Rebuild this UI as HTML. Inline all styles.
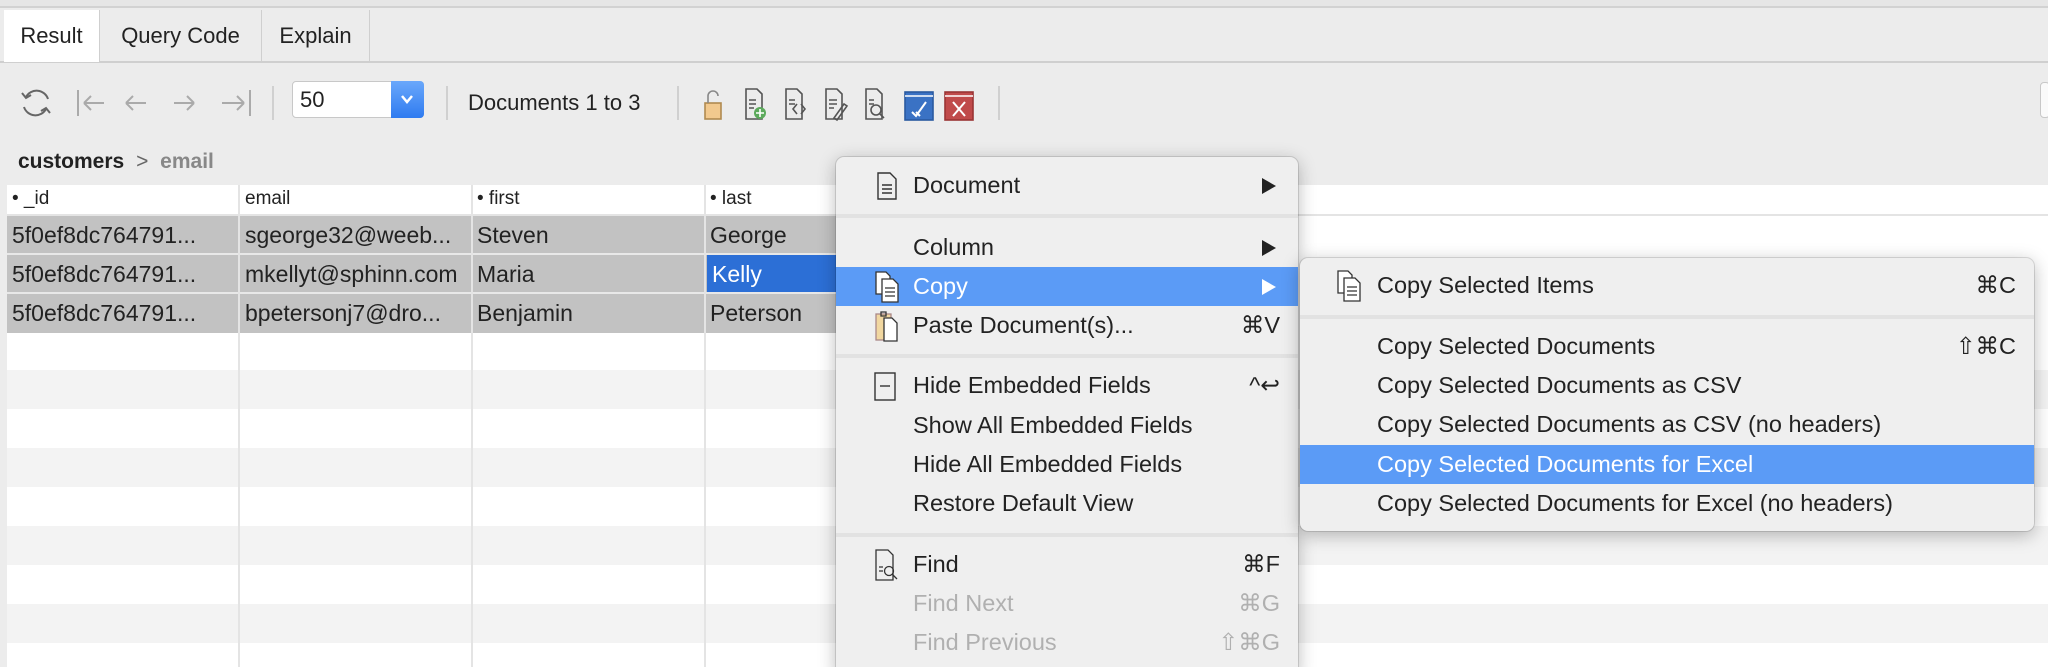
<!DOCTYPE html>
<html style="overflow:hidden;width:2048px;height:667px"><head><meta charset="utf-8"><style>
*{box-sizing:border-box;margin:0;padding:0}
body{width:2048px;height:667px;overflow:hidden;background:#ececec;font-family:"Liberation Sans",Arial,sans-serif;position:relative;color:#222}
.abs{position:absolute}
.tab{position:absolute;top:10px;height:52px;font-size:22px;line-height:52px;text-align:center;border-right:1px solid #cfcfcf}
.sep{position:absolute;top:86px;width:2px;height:34px;background:#d0d0d0}
.row{position:absolute;left:7px;width:840px;height:39px;font-size:23px;line-height:39px}
.cell{position:absolute;top:0;height:39px;white-space:nowrap;overflow:hidden;padding-left:5px}
.vl{position:absolute;top:185px;bottom:0;width:2px;background:#e4e4e4}
.menu{position:absolute;background:#efefef;border-radius:8px;box-shadow:0 4px 18px rgba(0,0,0,.28),0 0 0 1px rgba(0,0,0,.12)}
.mi{position:absolute;left:0;right:0;height:39px;font-size:23.5px;line-height:39px;color:#222}
.mi .t{position:absolute;left:77px}
.mi .k{position:absolute;right:18px}
.mi .a{position:absolute;right:22px;top:12px;width:0;height:0;border-left:14px solid #222;border-top:8px solid transparent;border-bottom:8px solid transparent}
.hl{background:#5b9bf6;color:#fff}
.hl .a{border-left-color:#fff}
.dis{color:#b0b0b0}
.ms{position:absolute;left:0;right:0;height:4px;background:#e2e2e2}
</style></head><body>
<div class="abs" style="left:0;top:0;width:2048px;height:8px;background:#e6e6e6;border-bottom:2px solid #d2d2d2"></div>
<div class="abs" style="left:0;top:61px;width:2048px;height:2px;background:#cfcfcf"></div>
<div class="tab" style="left:4px;width:96px;background:#fff">Result</div>
<div class="tab" style="left:100px;width:162px">Query Code</div>
<div class="tab" style="left:262px;width:108px">Explain</div>

<svg class="abs" style="left:18px;top:85px" width="36" height="36" viewBox="0 0 36 36" fill="none" stroke="#666" stroke-width="2"><path d="M8 12 A12 12 0 0 1 30 14"/><path d="M28 24 A12 12 0 0 1 6 22"/><path d="M4 8 L8 13 L13 10"/><path d="M32 28 L28 23 L23 26"/></svg>
<svg class="abs" style="left:74px;top:88px" width="180" height="30" viewBox="0 0 180 30" fill="none" stroke="#aaa" stroke-width="2"><path d="M4 2V28M10 15H30M10 15l7-7M10 15l7 7"/><path d="M52 15H72M52 15l7-7M52 15l7 7"/><path d="M100 15H120M120 15l-7-7M120 15l-7 7"/><path d="M176 2V28M148 15H170M170 15l-7-7M170 15l-7 7"/></svg>
<div class="sep" style="left:272px"></div>
<div class="abs" style="left:292px;top:81px;width:132px;height:37px;background:#fff;border:1px solid #c8c8c8;border-radius:4px;font-size:22px;line-height:35px;padding-left:7px">50</div>
<div class="abs" style="left:391px;top:81px;width:33px;height:37px;background:linear-gradient(#6aa8fb,#2f7bf0);border-radius:0 4px 4px 0"><svg width="33" height="37"><path d="M11 15l5 6 5-6" stroke="#fff" stroke-width="2.5" fill="none"/></svg></div>
<div class="sep" style="left:446px"></div>
<div class="abs" style="left:468px;top:88px;font-size:22px;line-height:30px">Documents 1 to 3</div>
<div class="sep" style="left:677px"></div>
<svg class="abs" style="left:700px;top:86px" width="280" height="36" viewBox="0 0 280 36" fill="none" stroke="#555" stroke-width="1.6">
<rect x="5" y="17" width="16" height="16" fill="#f2c98e" stroke="#b08a50"/><path d="M8 17V10a5 5 0 0 1 10 0" stroke="#888"/>
<path d="M46 3h11l5 5v25H46z"/><path d="M49 14h7M49 18h7M49 22h5"/><circle cx="60" cy="27" r="6" fill="#5caa5c" stroke="none"/><path d="M60 23v8M56 27h8" stroke="#fff"/>
<path d="M86 3h11l5 5v25H86z"/><path d="M89 14h6M89 18h6M97 18l-4 5 4 5M101 18l4 5-4 5"/>
<path d="M126 3h11l5 5v25h-16z"/><path d="M129 14h8M129 18h8M129 22h5M134 32l10-14 3 2-10 14z"/>
<path d="M166 3h11l5 5v25h-16z"/><path d="M169 14h5M169 18h5"/><circle cx="176" cy="24" r="5"/><path d="M180 28l4 4"/>
<rect x="205" y="6" width="28" height="28" fill="#3a72c4" stroke="#2a5aa0"/><path d="M205 10h28" stroke="#fff"/><path d="M212 26l4 4 10-14M216 26l4 4" stroke="#fff" stroke-width="2"/>
<rect x="245" y="6" width="28" height="28" fill="#c04a4a" stroke="#9a3535"/><path d="M245 10h28" stroke="#fff"/><path d="M253 16l12 14M265 16l-12 14" stroke="#fff" stroke-width="2"/>
</svg>
<div class="sep" style="left:998px"></div>
<div class="abs" style="left:2040px;top:82px;width:10px;height:36px;border:1px solid #c8c8c8;border-radius:4px;background:#fafafa"></div>

<div class="abs" style="left:18px;top:148px;font-size:21px;line-height:28px"><b>customers</b> <span style="color:#666;margin:0 6px">&gt;</span> <b style="color:#888">email</b></div>

<div class="abs" style="left:7px;top:185px;width:2041px;height:482px;background:#fff"></div>
<div class="abs" style="left:7px;top:331px;width:2041px;height:336px;background:repeating-linear-gradient(#fff 0 39px,#f3f3f3 39px 78px)"></div>
<div class="row" style="top:183px;font-size:19px;height:32px;line-height:32px">
<div class="cell" style="left:0">• _id</div><div class="cell" style="left:233px">email</div><div class="cell" style="left:465px">• first</div><div class="cell" style="left:698px">• last</div></div>
<div class="abs" style="left:7px;top:214px;width:2041px;height:2px;background:#e4e4e4"></div>
<div class="row" style="top:216px;background:#c2c2c2"><div class="cell" style="left:0;width:230px">5f0ef8dc764791...</div><div class="cell" style="left:233px;width:232px">sgeorge32@weeb...</div><div class="cell" style="left:465px">Steven</div><div class="cell" style="left:698px">George</div></div>
<div class="row" style="top:255px;background:#c2c2c2"><div class="cell" style="left:0;width:230px">5f0ef8dc764791...</div><div class="cell" style="left:233px;width:232px">mkellyt@sphinn.com</div><div class="cell" style="left:465px">Maria</div><div class="cell" style="left:700px;width:140px;background:#2c6fd6;color:#fff">Kelly</div></div>
<div class="row" style="top:294px;background:#c2c2c2"><div class="cell" style="left:0;width:230px">5f0ef8dc764791...</div><div class="cell" style="left:233px;width:232px">bpetersonj7@dro...</div><div class="cell" style="left:465px">Benjamin</div><div class="cell" style="left:698px">Peterson</div></div>
<div class="abs" style="left:7px;top:253px;width:840px;height:2px;background:#e8e8e8"></div>
<div class="abs" style="left:7px;top:292px;width:840px;height:2px;background:#e8e8e8"></div>
<div class="vl" style="left:238px"></div><div class="vl" style="left:471px"></div><div class="vl" style="left:704px"></div>

<div class="menu" style="left:836px;top:157px;width:462px;height:520px">
<div class="mi" style="top:9px"><svg class="abs" style="left:40px;top:6px" width="22" height="28" fill="none" stroke="#333" stroke-width="1.4"><path d="M2 1h12l6 6v20H2z"/><path d="M6 13h10M6 17h10M6 21h10"/></svg><span class="t">Document</span><span class="a"></span></div>
<div class="ms" style="top:57px"></div>
<div class="mi" style="top:71px"><span class="t">Column</span><span class="a"></span></div>
<div class="mi hl" style="top:110px"><svg class="abs" style="left:38px;top:4px" width="26" height="32" fill="#fff" stroke="#333" stroke-width="1.3"><path d="M2 1h10l4 4v18H2z"/><path d="M8 8h11l5 5v18H8z"/><path d="M11 17h10M11 21h10M11 25h10"/></svg><span class="t">Copy</span><span class="a"></span></div>
<div class="mi" style="top:149px"><svg class="abs" style="left:38px;top:4px" width="26" height="32" fill="none" stroke="#333" stroke-width="1.3"><rect x="2" y="4" width="15" height="26" fill="#f1d7a0" stroke="#a88"/><path d="M10 8h8l5 5v18H10z" fill="#fff"/><path d="M7 2h5v4H7z"/></svg><span class="t">Paste Document(s)...</span><span class="k">⌘V</span></div>
<div class="ms" style="top:197px"></div>
<div class="mi" style="top:209px"><svg class="abs" style="left:38px;top:6px" width="22" height="30" fill="none" stroke="#333" stroke-width="1.4"><rect x="1" y="1" width="20" height="27"/><path d="M6 14h10"/></svg><span class="t">Hide Embedded Fields</span><span class="k">^↩</span></div>
<div class="mi" style="top:249px"><span class="t">Show All Embedded Fields</span></div>
<div class="mi" style="top:288px"><span class="t">Hide All Embedded Fields</span></div>
<div class="mi" style="top:327px"><span class="t">Restore Default View</span></div>
<div class="ms" style="top:376px"></div>
<div class="mi" style="top:388px"><svg class="abs" style="left:38px;top:4px" width="28" height="32" fill="none" stroke="#333" stroke-width="1.3"><path d="M2 1h12l5 5v25H2z"/><path d="M5 18h4M5 22h4"/><circle cx="15" cy="22" r="4.5"/><path d="M18 25l5 5"/></svg><span class="t">Find</span><span class="k">⌘F</span></div>
<div class="mi dis" style="top:427px"><span class="t">Find Next</span><span class="k">⌘G</span></div>
<div class="mi dis" style="top:466px"><span class="t">Find Previous</span><span class="k">⇧⌘G</span></div>
</div>

<div class="menu" style="left:1300px;top:258px;width:734px;height:273px">
<div class="mi" style="top:8px"><svg class="abs" style="left:36px;top:4px" width="26" height="32" fill="#fff" stroke="#333" stroke-width="1.3"><path d="M2 1h10l4 4v18H2z"/><path d="M8 8h11l5 5v18H8z"/><path d="M11 17h10M11 21h10M11 25h10"/></svg><span class="t">Copy Selected Items</span><span class="k">⌘C</span></div>
<div class="ms" style="top:57px"></div>
<div class="mi" style="top:69px"><span class="t">Copy Selected Documents</span><span class="k">⇧⌘C</span></div>
<div class="mi" style="top:108px"><span class="t">Copy Selected Documents as CSV</span></div>
<div class="mi" style="top:147px"><span class="t">Copy Selected Documents as CSV (no headers)</span></div>
<div class="mi hl" style="top:187px"><span class="t">Copy Selected Documents for Excel</span></div>
<div class="mi" style="top:226px"><span class="t">Copy Selected Documents for Excel (no headers)</span></div>
</div>
</body></html>
